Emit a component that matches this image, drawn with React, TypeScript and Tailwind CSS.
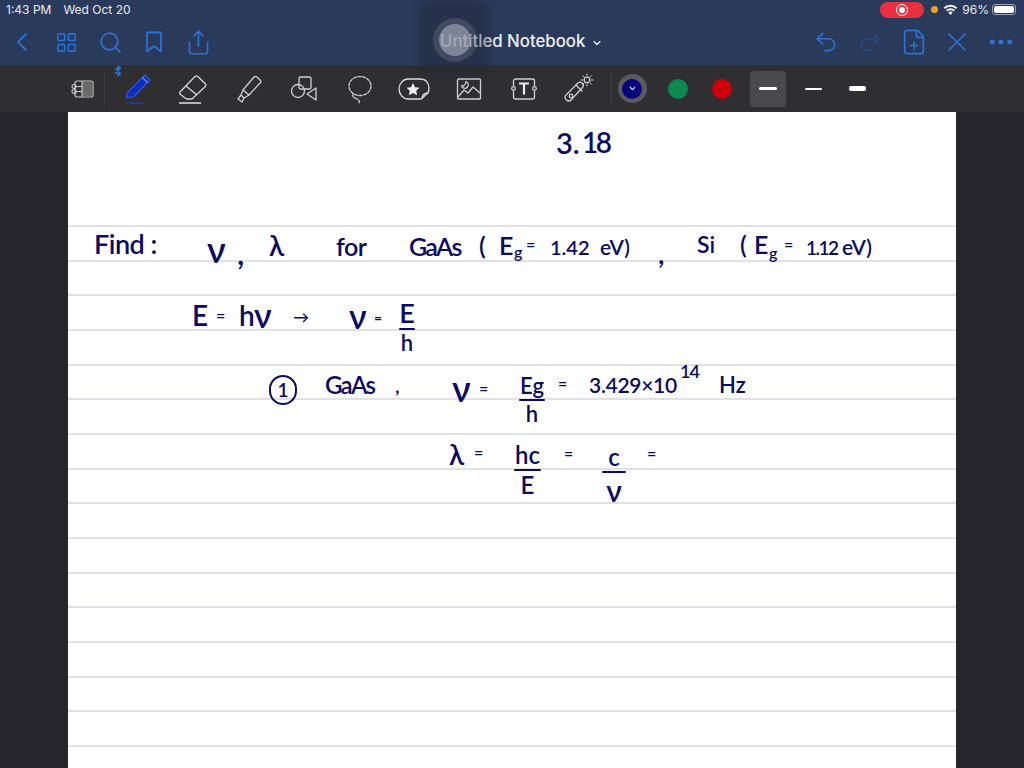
import { Bluetooth, ChevronDown, ChevronLeft, LayoutGrid, MoreHorizontal, Redo2, Search, Share, Undo2, X, FilePlus } from "lucide-react"
import type { ReactNode } from "react"

const font = "font-['Inter','Liberation_Sans',sans-serif]"
const hand = "font-['Lato','Open_Sans',sans-serif]"

function BookmarkIcon() {
  return (
    <svg width="18" height="22" viewBox="0 0 18 22" fill="none" stroke="currentColor" strokeWidth="1.8" strokeLinejoin="round">
      <path d="M2 1.500h14v19l-7-5.500-7 5.500z" />
    </svg>
  )
}

function NotebookIcon() {
  return (
    <svg width="24" height="24" viewBox="0 0 24 24" fill="none" stroke="#c9c9c9" strokeWidth="1.2">
      <rect x="5" y="4" width="18" height="16" rx="2" />
      <rect x="12" y="5" width="10.500" height="14.500" fill="#6a6a6a" stroke="none" />
      <path d="M5 9.500h7M5 14.500h7M12 4v16" />
      <circle cx="4" cy="9.500" r="2" />
      <circle cx="4" cy="14.500" r="2" />
    </svg>
  )
}

function PenIcon() {
  return (
    <svg width="34" height="34" viewBox="0 0 34 34" fill="none">
      <path d="M3 26l2-6L22 3l5 5-17 17z" fill="#0a2cc0" stroke="#2f55d8" strokeWidth="1.2" strokeLinejoin="round" />
      <path d="M19.500 5.500l5 5" stroke="#7f95ea" strokeWidth="1.2" />
      <path d="M4 31h16" stroke="#1a3ac8" strokeWidth="1.6" />
    </svg>
  )
}

function EraserIcon() {
  return (
    <svg width="32" height="32" viewBox="0 0 32 32" fill="none" stroke="#d6d6d6" strokeWidth="1.3" strokeLinejoin="round">
      <path d="M3 19L18 3.500a2 2 0 0 1 2.800 0l7.500 7.200a2 2 0 0 1 0 2.800L15 26H9.500L3.500 21.500a1.700 1.700 0 0 1-.5-2.500z" />
      <path d="M9 13l11 9" />
      <path d="M2 30h22" strokeWidth="1.600" />
    </svg>
  )
}

function HighlighterIcon() {
  return (
    <svg width="30" height="30" viewBox="0 0 30 30" fill="none" stroke="#cfcfcf" strokeWidth="1.3" strokeLinejoin="round">
      <path d="M19 3l-11 13 6 5L25.500 8.500a1.500 1.500 0 0 0 0-2L22 3a2 2 0 0 0-3 0z" />
      <path d="M8 16l-2 5 3 3 5-3" />
      <path d="M6 21l-3 4 4 3 2-4" />
    </svg>
  )
}

function ShapesIcon() {
  return (
    <svg width="28" height="28" viewBox="0 0 28 28" fill="none" stroke="#d0d0d0" strokeWidth="1.3" strokeLinejoin="round">
      <rect x="9" y="2" width="12" height="12" rx="1.500" />
      <circle cx="8" cy="16" r="6.500" />
      <path d="M26 13v12l-9-6z" />
    </svg>
  )
}

function LassoIcon() {
  return (
    <svg width="26" height="30" viewBox="0 0 26 30" fill="none" stroke="#cfcfcf" strokeWidth="1.3" strokeDasharray="3 1.600" strokeLinecap="round">
      <ellipse cx="13" cy="12" rx="11" ry="9.500" />
      <path d="M6 20c-1 4 2 4 4 5s3 2 2 4" />
    </svg>
  )
}

function StickerIcon() {
  return (
    <svg width="32" height="26" viewBox="0 0 32 26" fill="none" stroke="#dedede" strokeWidth="1.3" strokeLinejoin="round">
      <path d="M10 3h12c6 0 9 4 9 9 0 2-.4 3.500-1 5l-7 6H10C5 23 1 18 1 13S5 3 10 3z" />
      <path d="M24 23c0-4 2-6 6-6" />
      <path d="M15 7l2 4.200 4.500.5-3.300 3 .9 4.600-4.100-2.300-4.100 2.300.9-4.600-3.300-3 4.500-.5z" fill="#f0f0f0" stroke="none" />
    </svg>
  )
}

function ImageIcon() {
  return (
    <svg width="26" height="24" viewBox="0 0 26 24" fill="none" stroke="#cfcfcf" strokeWidth="1.3" strokeLinejoin="round">
      <rect x="1.500" y="2" width="23" height="20" rx="1" />
      <path d="M2 20l6-7 4 3 5-6 7 6" />
      <path d="M10 4.500a3.500 3.500 0 1 1-4.500 4.500 4.500 4.500 0 0 0 4.500-4.500z" />
    </svg>
  )
}

function TextBoxIcon() {
  return (
    <svg width="28" height="24" viewBox="0 0 28 24" fill="none" stroke="#d0d0d0" strokeWidth="1.3">
      <path d="M3.500 9V4a2 2 0 0 1 2-2h17a2 2 0 0 1 2 2v5M3.500 14v6a2 2 0 0 0 2 2h17a2 2 0 0 0 2-2v-6" />
      <circle cx="3.500" cy="11.500" r="1.800" />
      <circle cx="24.500" cy="11.500" r="1.800" />
      <path d="M9 6.500h10M14 6.500v11" stroke="#ededed" strokeWidth="2.200" />
    </svg>
  )
}

function LaserIcon() {
  return (
    <svg width="32" height="32" viewBox="0 0 32 32" fill="none" stroke="#cfcfcf" strokeWidth="1.3" strokeLinecap="round">
      <path d="M4 22L16 10a3 3 0 0 1 4 0l.5.500a3 3 0 0 1 0 4L9 27a3 3 0 0 1-4.500 0l-.5-.5a3 3 0 0 1 0-4.500z" />
      <circle cx="9" cy="23" r="1.800" />
      <path d="M14 12l6 6" />
      <circle cx="25" cy="7" r="2.800" />
      <path d="M25 1v1.500M25 11.500V13M19 7h1.500M29.500 7H31M20.800 2.800l1 1M28.200 10.200l1 1M20.800 11.200l1-1M28.200 3.800l1-1" strokeWidth="1" />
    </svg>
  )
}

function Wifi() {
  return (
    <svg width="15" height="11" viewBox="0 0 15 11" fill="#f2f2f2">
      <path d="M7.500 11L5.300 8.600a3.200 3.200 0 0 1 4.400 0z" />
      <path d="M4.300 7.500L3 6.100a6.500 6.500 0 0 1 9 0l-1.300 1.400a4.600 4.600 0 0 0-6.400 0z" />
      <path d="M2 5L.6 3.600a10 10 0 0 1 13.800 0L13 5a8 8 0 0 0-11 0z" />
    </svg>
  )
}

function Ink({ className, children }: { className: string, children: ReactNode }) {
  return <span className={`absolute whitespace-pre leading-none text-[#0b0b63] font-semibold ${hand} ${className}`}>{children}</span>
}

function Fraction({ className, top, bottom, bar }: { className: string, top: ReactNode, bottom: ReactNode, bar: string }) {
  return (
    <div className={`absolute flex flex-col items-center leading-none text-[#0b0b63] font-semibold ${hand} ${className}`}>
      <span>{top}</span>
      <span className={`h-[2px] rounded bg-[#0b0b63] my-[2px] ${bar}`}></span>
      <span>{bottom}</span>
    </div>
  )
}

const tools = [
  { w: "w-[52px]", icon: <EraserIcon /> },
  { w: "w-[62px]", icon: <HighlighterIcon /> },
  { w: "w-[46px]", icon: <ShapesIcon /> },
  { w: "w-[66px]", icon: <LassoIcon /> },
  { w: "w-[42px]", icon: <StickerIcon /> },
  { w: "w-[68px]", icon: <ImageIcon /> },
  { w: "w-[42px]", icon: <TextBoxIcon /> },
  { w: "w-[66px]", icon: <LaserIcon /> },
]

const ruled = Array.from({ length: 19 }, (_, i) => i)

export default function App() {
  return (
    <div className={`relative w-[1024px] h-[768px] overflow-hidden bg-[#26262a] ${font}`}>
      <div className="h-[65px] bg-[#2a3a5b]">
        <div className="h-[19px] pl-[6px] pr-[8px] flex items-center justify-between text-[12px] text-[#e8ebf2]">
          <div className="flex gap-[12px]">
            <span>1:43 PM</span>
            <span>Wed Oct 20</span>
          </div>
          <div className="flex items-center">
            <div className="w-[44px] h-[16px] mr-[7px] rounded-full bg-[#e8303f] flex items-center justify-center">
              <div className="w-[12px] h-[12px] rounded-full border border-white flex items-center justify-center">
                <div className="w-[6px] h-[6px] rounded-full bg-white"></div>
              </div>
            </div>
            <div className="w-[7px] h-[7px] rounded-full bg-[#f0a020] mr-[5px]"></div>
            <Wifi />
            <span className="ml-[4px]">96%</span>
            <div className="ml-[3px] w-[24px] h-[11px] rounded-[3px] border border-[#9aa3b5] p-[1px]">
              <div className="w-full h-full rounded-[2px] bg-white"></div>
            </div>
          </div>
        </div>
        <div className="relative h-[46px] flex items-center justify-between text-[#2a72d4]">
          <div className="flex items-center">
            <div className="w-[44px] flex justify-center"><ChevronLeft size={32} strokeWidth={1.4} /></div>
            <div className="w-[44px] flex justify-center"><LayoutGrid size={23} strokeWidth={1.6} /></div>
            <div className="w-[44px] flex justify-center"><Search size={25} strokeWidth={1.6} /></div>
            <div className="w-[44px] flex justify-center"><BookmarkIcon /></div>
            <div className="w-[44px] flex justify-center"><Share size={27} strokeWidth={1.5} /></div>
          </div>
          <div className="flex items-center text-[16.8px] font-medium text-[#eef0f5] absolute left-[440px]">
            <span>Untitled Notebook</span>
            <ChevronDown size={12} strokeWidth={2.5} className="ml-[6px] mt-[2px]" />
          </div>
          <div className="flex items-center pr-[1px]">
            <div className="w-[45px] flex justify-center"><Undo2 size={26} strokeWidth={1.5} /></div>
            <div className="w-[44px] flex justify-center text-[#254a84]"><Redo2 size={26} strokeWidth={1.5} /></div>
            <div className="w-[43px] flex justify-center"><FilePlus size={28} strokeWidth={1.4} /></div>
            <div className="w-[44px] flex justify-center"><X size={32} strokeWidth={1.3} /></div>
            <div className="w-[44px] flex justify-center"><MoreHorizontal size={30} strokeWidth={2} /></div>
          </div>
        </div>
      </div>

      <div className="h-[47px] pl-[60px] bg-[#2f2f31] flex items-center">
        <div className="w-[44px] flex justify-center"><NotebookIcon /></div>
        <div className="w-px h-[34px] bg-[#3d3d3f]"></div>
        <div className="relative ml-[8px] w-[54px] flex justify-center">
          <Bluetooth size={12} strokeWidth={3} className="absolute left-[-1px] top-[-7px] text-[#2a72d4]" />
          <PenIcon />
        </div>
        {tools.map((t, i) => (
          <div key={i} className={`${t.w} flex justify-center`}>{t.icon}</div>
        ))}
        <div className="w-px h-[34px] bg-[#3d3d3f]"></div>
        <div className="w-[40px] flex justify-center">
          <div className="w-[29px] h-[29px] rounded-full bg-[#5a5a5e] flex items-center justify-center">
            <div className="w-[20px] h-[20px] rounded-full bg-[#04047e] flex items-center justify-center">
              <ChevronDown size={9} strokeWidth={3} className="text-white" />
            </div>
          </div>
        </div>
        <div className="w-[52px] flex justify-center"><div className="w-[20px] h-[20px] rounded-full bg-[#0b8a52]"></div></div>
        <div className="w-[36px] flex justify-center"><div className="w-[20px] h-[20px] rounded-full bg-[#cc0008]"></div></div>
        <div className="ml-[10px] w-[36px] h-[36px] rounded-[4px] bg-[#4a4a4c] flex items-center justify-center">
          <div className="w-[18px] h-[3px] rounded-full bg-white"></div>
        </div>
        <div className="w-[54px] flex justify-center"><div className="w-[17px] h-[2px] rounded-full bg-white"></div></div>
        <div className="w-[34px] flex justify-center"><div className="w-[17px] h-[5px] rounded-[2px] bg-white"></div></div>
      </div>

      <div className="relative ml-[68px] w-[888px] h-[656px] bg-white pt-[113px]">
        {ruled.map((i) => (
          <div key={i} className="h-[34.67px] border-t-[2px] border-[#e0e0e6]"></div>
        ))}

        <Ink className="left-[488px] top-[16px] text-[29px]">3.</Ink>
        <Ink className="left-[514px] top-[16px] text-[28px] tracking-[-2.5px]">18</Ink>

        <Ink className="left-[26px] top-[118px] text-[27px] tracking-[-0.5px]">Find :</Ink>
        <Ink className="left-[139px] top-[119px] text-[36px]">ν</Ink>
        <Ink className="left-[169px] top-[125px] text-[32px]">,</Ink>
        <Ink className="left-[201px] top-[119px] text-[28px]">λ</Ink>
        <Ink className="left-[268px] top-[122px] text-[25px] tracking-[-0.5px]">for</Ink>
        <Ink className="left-[341px] top-[122px] text-[25px] tracking-[-1.8px]">GaAs</Ink>
        <Ink className="left-[411px] top-[121px] text-[25px]">(</Ink>
        <Ink className="left-[431px] top-[121px] text-[25px]">E</Ink>
        <Ink className="left-[446px] top-[132px] text-[16px]">g</Ink>
        <Ink className="left-[458px] top-[124px] text-[16px]">=</Ink>
        <Ink className="left-[482px] top-[125px] text-[20px]">1.42</Ink>
        <Ink className="left-[532px] top-[124px] text-[21px]">eV)</Ink>
        <Ink className="left-[590px] top-[127px] text-[28px]">,</Ink>
        <Ink className="left-[629px] top-[121px] text-[23px]">Si</Ink>
        <Ink className="left-[672px] top-[120px] text-[25px]">(</Ink>
        <Ink className="left-[686px] top-[120px] text-[25px]">E</Ink>
        <Ink className="left-[701px] top-[133px] text-[16px]">g</Ink>
        <Ink className="left-[716px] top-[124px] text-[16px]">=</Ink>
        <Ink className="left-[738px] top-[126px] text-[19px] tracking-[-1.5px]">1.12</Ink>
        <Ink className="left-[774px] top-[124px] text-[21px]">eV)</Ink>

        <Ink className="left-[124px] top-[189px] text-[28px]">E</Ink>
        <Ink className="left-[148px] top-[195px] text-[16px]">=</Ink>
        <Ink className="left-[171px] top-[189px] text-[28px]">h</Ink>
        <Ink className="left-[186px] top-[186px] text-[34px]">ν</Ink>
        <Ink className="left-[225px] top-[197px] text-[16px]">→</Ink>
        <Ink className="left-[281px] top-[187px] text-[34px]">ν</Ink>
        <Ink className="left-[306px] top-[199px] text-[14px]">=</Ink>
        <Fraction className="left-[331px] top-[187px] text-[22px]" top={<span className="text-[27px]">E</span>} bottom="h" bar="w-[16px]" />

        <div className="absolute left-[201px] top-[263px] w-[28px] h-[30px] rounded-full border-2 border-[#0b0b63] flex items-center justify-center text-[19px] text-[#0b0b63] font-semibold font-['Lato',sans-serif]">1</div>
        <Ink className="left-[257px] top-[261px] text-[24px] tracking-[-1.8px]">GaAs</Ink>
        <Ink className="left-[327px] top-[263px] text-[20px]">,</Ink>
        <Ink className="left-[384px] top-[258px] text-[36px]">ν</Ink>
        <Ink className="left-[411px] top-[268px] text-[16px]">=</Ink>
        <Fraction className="left-[451px] top-[263px] text-[22px]" top="Eg" bottom="h" bar="w-[26px]" />
        <Ink className="left-[490px] top-[263px] text-[16px]">=</Ink>
        <Ink className="left-[521px] top-[262px] text-[21px] tracking-[-0.3px]">3.429×10</Ink>
        <Ink className="left-[612px] top-[250px] text-[18px] tracking-[-1px]">14</Ink>
        <Ink className="left-[651px] top-[262px] text-[22px]">Hz</Ink>

        <Ink className="left-[381px] top-[328px] text-[28px]">λ</Ink>
        <Ink className="left-[406px] top-[332px] text-[16px]">=</Ink>
        <Fraction className="left-[446px] top-[331px] text-[24px]" top="hc" bottom="E" bar="w-[27px]" />
        <Ink className="left-[496px] top-[333px] text-[16px]">=</Ink>
        <Fraction className="left-[534px] top-[333px] text-[24px]" top="c" bottom={<span className="text-[30px]">ν</span>} bar="w-[24px]" />
        <Ink className="left-[579px] top-[333px] text-[16px]">=</Ink>
      </div>

      <div className="absolute left-[418px] top-0 w-[72px] h-[76px] rounded-[10px] bg-[#20242e]/35 blur-[3px]"></div>
      <div className="absolute left-[433px] top-[18px] w-[44px] h-[44px] rounded-full bg-[#8b93a6]/25 flex items-center justify-center">
        <div className="w-[32px] h-[32px] rounded-full bg-[#a6acba]/60"></div>
      </div>
    </div>
  )
}
